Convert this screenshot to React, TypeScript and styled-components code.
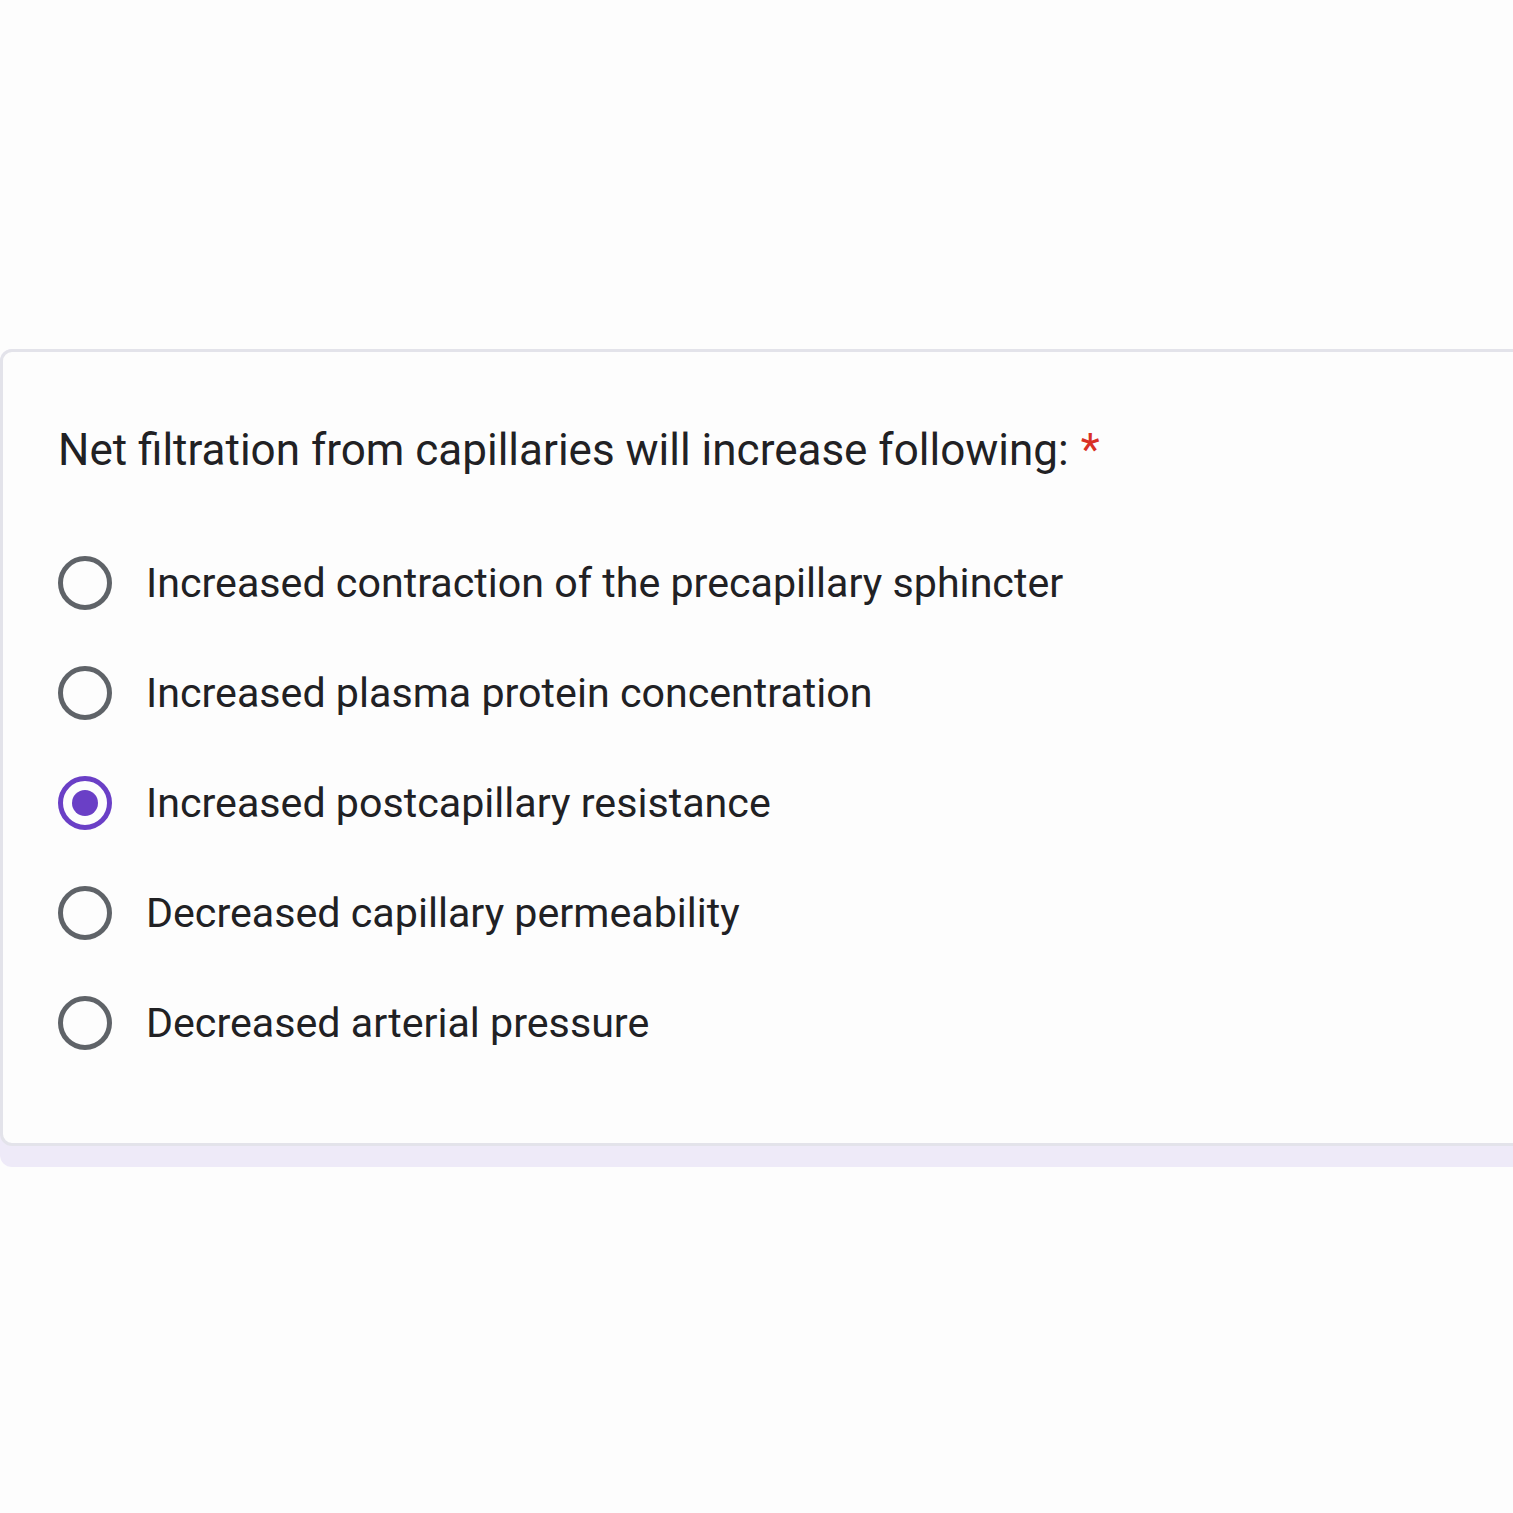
import React from "react";
import styled, { createGlobalStyle } from "styled-components";

const Global = createGlobalStyle`
  html, body { margin: 0; padding: 0; background: #fdfdfd; }
  body { font-family: Roboto, "Noto Sans", Arial, sans-serif; }
`;

const Page = styled.div`
  width: 1513px;
  height: 1513px;
  overflow: hidden;
  padding-top: 349px;
  box-sizing: border-box;
`;

const CardWrap = styled.div`
  width: 1540px;
  background: #eeeaf8;
  border-radius: 12px;
  padding-bottom: 21px;
`;

const Card = styled.div`
  background: #fdfdfd;
  border: 3px solid #e3e3ea;
  border-radius: 12px;
  padding: 70px 0 65px 55px;
  box-sizing: border-box;
`;

const Question = styled.div`
  font-size: 44px;
  color: #212124;
  line-height: 56px;
  margin-bottom: 50px;
`;

const Star = styled.span`
  color: #d93025;
  margin-left: 12px;
`;

const Options = styled.div`
  display: flex;
  flex-direction: column;
`;

const Row = styled.div`
  display: flex;
  align-items: center;
  height: 110px;
  gap: 34px;
`;

const Radio = styled.div<{ $checked?: boolean }>`
  width: 54px;
  height: 54px;
  border-radius: 50%;
  box-sizing: border-box;
  border: 5px solid ${(p) => (p.$checked ? "#6a3fc6" : "#5f6368")};
  display: flex;
  align-items: center;
  justify-content: center;
  flex-shrink: 0;
`;

const Dot = styled.div`
  width: 26px;
  height: 26px;
  border-radius: 50%;
  background: #6a3fc6;
`;

const Label = styled.div`
  font-size: 41.2px;
  color: #212124;
`;

const options = [
  "Increased contraction of the precapillary sphincter",
  "Increased plasma protein concentration",
  "Increased postcapillary resistance",
  "Decreased capillary permeability",
  "Decreased arterial pressure",
];

export default function App() {
  return (
    <Page>
      <Global />
      <CardWrap>
        <Card>
          <Question>
            Net filtration from capillaries will increase following:<Star>*</Star>
          </Question>
          <Options>
            {options.map((o, i) => (
              <Row key={o}>
                <Radio $checked={i === 2}>{i === 2 && <Dot />}</Radio>
                <Label>{o}</Label>
              </Row>
            ))}
          </Options>
        </Card>
      </CardWrap>
    </Page>
  );
}
